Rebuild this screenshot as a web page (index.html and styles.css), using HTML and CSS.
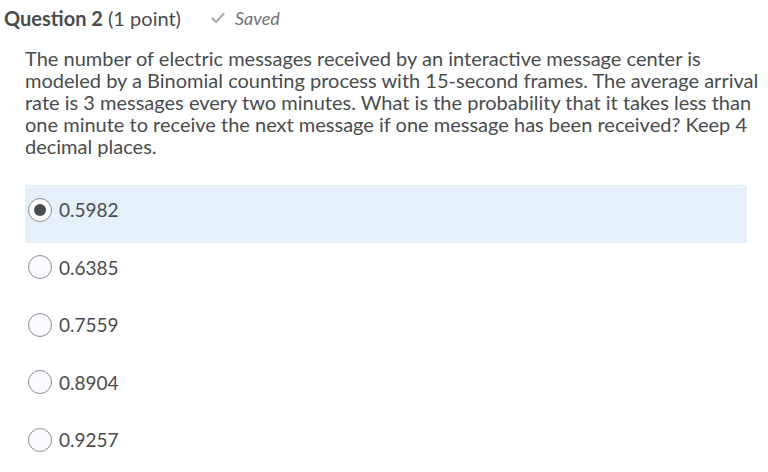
FILE: index.html
```html
<!DOCTYPE html>
<html>
<head>
<meta charset="utf-8">
<link rel="stylesheet" href="styles.css">
</head>
<body>
<div class="page">
  <div class="header">
    <h2 class="title"><span class="qnum">Question 2</span> <span class="points">(1 point)</span></h2>
    <span class="saved">
      <svg class="check" width="14" height="12" viewBox="0 0 14 12"><path d="M1.5 6.5 L5 10 L12.5 2" fill="none" stroke="#a9adb0" stroke-width="2.3" stroke-linecap="round" stroke-linejoin="round"/></svg>
      <span class="saved-text">Saved</span>
    </span>
  </div>
  <div class="body">
    <p class="question">The number of electric messages received by an interactive message center is modeled by a Binomial counting process with 15-second frames. The average arrival rate is 3 messages every two minutes. What is the probability that it takes less than one minute to receive the next message if one message has been received? Keep 4 decimal places.</p>
    <div class="options">
      <label class="option selected"><span class="radio checked"></span><span class="opt-text">0.5982</span></label>
      <label class="option"><span class="radio"></span><span class="opt-text">0.6385</span></label>
      <label class="option"><span class="radio"></span><span class="opt-text">0.7559</span></label>
      <label class="option"><span class="radio"></span><span class="opt-text">0.8904</span></label>
      <label class="option"><span class="radio"></span><span class="opt-text">0.9257</span></label>
    </div>
  </div>
</div>
</body>
</html>
```
FILE: styles.css
```css
html, body {
  margin: 0;
  padding: 0;
  background: #ffffff;
}
body {
  font-family: Lato, "Noto Sans", sans-serif;
  color: #494c4e;
}
.page {
  padding: 5px 21px 0 4px;
}
.header {
  display: flex;
  align-items: center;
  height: 26px;
}
.title {
  margin: 0;
  font-size: 20px;
  font-weight: 400;
  line-height: 26px;
}
.qnum {
  font-weight: 700;
}
.saved {
  display: flex;
  align-items: center;
  margin-left: 30px;
  color: #6e7376;
  font-style: italic;
  font-size: 18px;
}
.check {
  margin-right: 10px;
}
.body {
  padding-left: 21px;
}
.question {
  margin: 16px -14px 0 0;
  font-size: 20px;
  line-height: 22px;
}
.options {
  margin-top: 28px;
  display: flex;
  flex-direction: column;
}
.option {
  box-sizing: border-box;
  display: flex;
  align-items: center;
  height: 57.5px;
  padding: 0 0 8px 3px;
}
.option.selected {
  background: #e6f0fa;
}
.radio {
  box-sizing: border-box;
  width: 24px;
  height: 24px;
  border-radius: 50%;
  border: 1px solid #898d90;
  background: #f9fbff;
  display: flex;
  align-items: center;
  justify-content: center;
}
.radio.checked {
  background: #ffffff;
}
.radio.checked::after {
  content: "";
  width: 12px;
  height: 12px;
  border-radius: 50%;
  background: #494c4e;
}
.opt-text {
  margin-left: 7px;
  font-size: 19px;
}
```
